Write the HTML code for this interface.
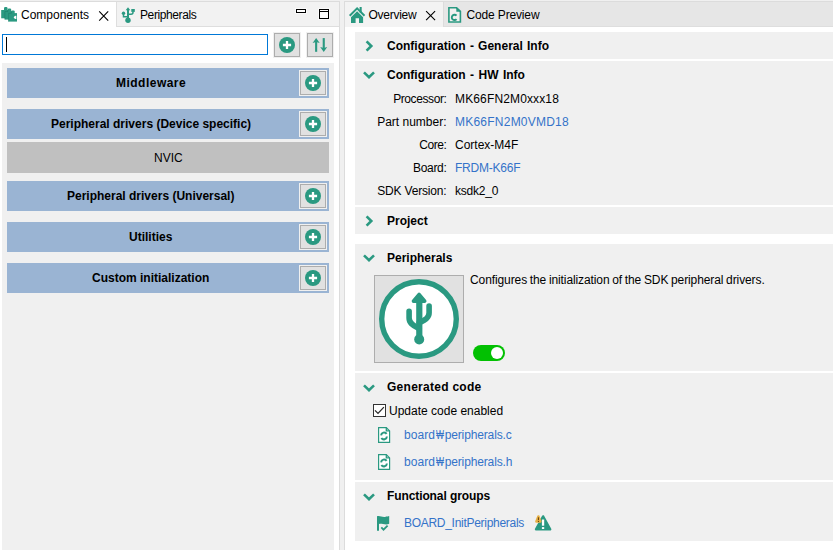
<!DOCTYPE html>
<html><head><meta charset="utf-8">
<style>
html,body{margin:0;padding:0;}
body{width:833px;height:550px;overflow:hidden;background:#fff;position:relative;font-family:"Liberation Sans","NanumGothic",sans-serif;font-size:12px;color:#000;}
.abs{position:absolute;}
.t{position:absolute;white-space:nowrap;line-height:16px;height:16px;}
.b{font-weight:bold;}
.bar{position:absolute;left:7px;width:322px;height:30px;background:#9ab4d3;}
.btn{position:absolute;box-sizing:border-box;border:1px solid #adadad;background:#e1e1e1;outline:1px solid #f0f0f0;}
.sec{position:absolute;left:355px;width:478px;background:#f0f0f0;}
.lnk{color:#3473c9;}
.won{display:inline-block;width:8.800px;transform:scaleX(0.7);transform-origin:0 50%;margin-left:0.800px}
</style></head><body>
<!-- top strip -->
<div class="abs" style="left:0;top:0;width:833px;height:1px;background:#f0f0f0"></div>
<div class="abs" style="left:0;top:1px;width:340px;height:1px;background:#dcdcdc"></div>
<div class="abs" style="left:344px;top:1px;width:489px;height:1px;background:#dcdcdc"></div>
<!-- LEFT PANEL -->
<div class="abs" id="ltab" style="left:0;top:2px;width:339px;height:25px;background:#f2f2f2;border-bottom:1px solid #dedede;box-sizing:border-box"></div>
<div class="abs" id="lact" style="left:0;top:2px;width:117px;height:25px;background:#fff;border-right:1px solid #dedede;box-sizing:border-box"></div>
<div class="abs" style="left:339px;top:1px;width:1px;height:549px;background:#dcdcdc"></div>
<div class="abs" style="left:340px;top:0px;width:4px;height:550px;background:#f0f0f0"></div>
<div class="abs" style="left:344px;top:1px;width:1px;height:549px;background:#dcdcdc"></div>
<!-- components icon -->
<svg class="abs" style="left:0px;top:5px" width="19" height="19" viewBox="0 5 19 19"><g fill="#2a9981">
<rect x="1.200" y="10" width="8" height="8.300"/><rect x="4" y="7" width="3.500" height="4" rx="1.200"/>
<rect x="4.700" y="11.400" width="8" height="8.200"/><rect x="7.700" y="8.500" width="3.500" height="4" rx="1.200"/>
<path d="M8.300 13.100h8.700v8.500h-8.700z"/><path d="M16.300 15.700h-0.700a1.650 1.650 0 0 0 0 3.300h0.700z" fill="#fff"/><rect x="11.200" y="10.400" width="3.500" height="4" rx="1.200"/>
</g><g fill="none" stroke="#16705c" stroke-opacity="0.55" stroke-width="0.700"><path d="M4.900 19.500V11.500H8"/><path d="M8.600 21.500V13.300H11.500"/><path d="M7.900 11.300V9.500"/><path d="M11.400 13V11.400"/></g></svg>
<div class="t" id="tcomp" style="left:21px;top:7px;">Components</div>
<svg class="abs" style="left:98px;top:10px" width="12" height="12" viewBox="98 10 12 12"><path d="M99.200 11.400L108.200 20.600M108.200 11.400L99.200 20.600" stroke="#000" stroke-width="1.100" fill="none"/></svg>
<!-- peripherals tab icon -->
<svg class="abs" style="left:120px;top:5px" width="17" height="20" viewBox="120 5 17 20"><g fill="#2a9981" stroke="none">
<path d="M128 7.200l2.300 3h-4.600z"/><circle cx="128" cy="20.300" r="2.700"/><circle cx="123.500" cy="13.300" r="1.700"/><rect x="131.300" y="9" width="3.500" height="2.900"/></g>
<g fill="none" stroke="#2a9981"><path d="M128 9.500V20" stroke-width="2"/><path d="M123.500 13.500V16.700H128" stroke-width="1.500"/><path d="M133 11.500V12.300Q133 14.300 131 14.300H128" stroke-width="1.500"/></g></svg>
<div class="t" id="tper" style="left:140px;top:7px;letter-spacing:-0.4px">Peripherals</div>
<!-- min / max icons -->
<div class="abs" style="left:296px;top:9px;width:10px;height:4px;box-sizing:border-box;border:1px solid #000;background:#fff;box-shadow:0 0 0 1px #fafafa"></div>
<div class="abs" style="left:319px;top:9px;width:10px;height:10px;box-sizing:border-box;border:1px solid #000;background:#fff;box-shadow:0 0 0 1px #fafafa"></div>
<div class="abs" style="left:319px;top:11px;width:10px;height:1px;background:#000"></div>
<!-- search -->
<div class="abs" id="inp" style="left:2px;top:34px;width:266px;height:21px;box-sizing:border-box;border:1px solid #0078d7;background:#fff"></div>
<div class="abs" style="left:6px;top:37px;width:1px;height:15px;background:#000"></div>
<div class="btn" style="left:274px;top:33px;width:26px;height:24px;"></div>
<svg class="abs" style="left:278px;top:36px" width="18" height="18" viewBox="0 0 18 18"><circle cx="9" cy="9" r="8" fill="#2a9981"/><path d="M9 4.900v8.200M4.900 9h8.200" stroke="#fff" stroke-width="2.300"/></svg>
<div class="btn" style="left:307px;top:33px;width:26px;height:24px;"></div>
<svg class="abs" style="left:310px;top:35px" width="20" height="20" viewBox="310 35 20 20"><g fill="#2a9981" stroke="none"><rect x="315.100" y="40" width="2.100" height="11.800"/><rect x="322.700" y="38.100" width="2.100" height="11.800"/><path d="M316.150 37.900L319.700 43.100L316.150 42L312.600 43.100Z"/><path d="M323.750 52L327.200 46.900L323.750 48L320.200 46.900Z"/></g></svg>
<!-- list panel -->
<div class="abs" style="left:2px;top:63px;width:332px;height:487px;background:#f0f0f0"></div>
<div class="bar" style="top:68px"></div>
<div class="bar" style="top:109px"></div>
<div class="bar" style="top:142px;height:31px;background:#c0c0c0"></div>
<div class="bar" style="top:181px"></div>
<div class="bar" style="top:222px"></div>
<div class="bar" style="top:263px"></div>
<div class="btn" style="left:300px;top:71px;width:26px;height:24px;"></div>
<svg class="abs" style="left:304px;top:74px" width="18" height="18" viewBox="0 0 18 18"><circle cx="9" cy="9" r="8" fill="#2a9981"/><path d="M9 4.900v8.200M4.900 9h8.200" stroke="#fff" stroke-width="2.300"/></svg>
<div class="btn" style="left:300px;top:112px;width:26px;height:24px;"></div>
<svg class="abs" style="left:304px;top:115px" width="18" height="18" viewBox="0 0 18 18"><circle cx="9" cy="9" r="8" fill="#2a9981"/><path d="M9 4.900v8.200M4.900 9h8.200" stroke="#fff" stroke-width="2.300"/></svg>
<div class="btn" style="left:300px;top:184px;width:26px;height:24px;"></div>
<svg class="abs" style="left:304px;top:187px" width="18" height="18" viewBox="0 0 18 18"><circle cx="9" cy="9" r="8" fill="#2a9981"/><path d="M9 4.900v8.200M4.900 9h8.200" stroke="#fff" stroke-width="2.300"/></svg>
<div class="btn" style="left:300px;top:225px;width:26px;height:24px;"></div>
<svg class="abs" style="left:304px;top:228px" width="18" height="18" viewBox="0 0 18 18"><circle cx="9" cy="9" r="8" fill="#2a9981"/><path d="M9 4.900v8.200M4.900 9h8.200" stroke="#fff" stroke-width="2.300"/></svg>
<div class="btn" style="left:300px;top:266px;width:26px;height:24px;"></div>
<svg class="abs" style="left:304px;top:269px" width="18" height="18" viewBox="0 0 18 18"><circle cx="9" cy="9" r="8" fill="#2a9981"/><path d="M9 4.900v8.200M4.900 9h8.200" stroke="#fff" stroke-width="2.300"/></svg>
<div class="t b" id="b1" style="left:116px;top:75px;letter-spacing:0.48px">Middleware</div>
<div class="t b" id="b2" style="left:51px;top:116px">Peripheral drivers (Device specific)</div>
<div class="t" id="b3" style="left:154px;top:150px">NVIC</div>
<div class="t b" id="b4" style="left:67px;top:188px">Peripheral drivers (Universal)</div>
<div class="t b" id="b5" style="left:129px;top:229px">Utilities</div>
<div class="t b" id="b6" style="left:92px;top:270px">Custom initialization</div>
<!-- RIGHT PANEL -->
<div class="abs" id="rtab" style="left:345px;top:2px;width:488px;height:25px;background:#e6e6e6;border-bottom:1px solid #dedede;box-sizing:border-box"></div>
<div class="abs" id="ract" style="left:345px;top:2px;width:99px;height:25px;background:#f3f3f3;border-right:1px solid #dcdcdc;box-sizing:border-box"></div>
<div class="t" id="tov" style="left:368.500px;top:7px;letter-spacing:-0.27px">Overview</div>
<div class="t" id="tcp" style="left:466.500px;top:7px;letter-spacing:-0.15px">Code Preview</div>
<div class="sec" style="top:32px;height:27px"></div>
<div class="sec" style="top:61px;height:144px"></div>
<div class="sec" style="top:207px;height:27px"></div>
<div class="sec" style="top:244px;height:127px"></div>
<div class="sec" style="top:373px;height:107px"></div>
<div class="sec" style="top:482px;height:59px"></div>
<div class="t b" id="s1" style="left:387px;top:38px;word-spacing:0.9px">Configuration - General Info</div>
<div class="t b" id="s2" style="left:387px;top:67px;word-spacing:1.1px">Configuration - HW Info</div>
<div class="t b" id="s3" style="left:387px;top:213px">Project</div>
<div class="t b" id="s4" style="left:387px;top:250px">Peripherals</div>
<div class="t b" id="s5" style="left:387px;top:379px;letter-spacing:0.27px">Generated code</div>
<div class="t b" id="s6" style="left:387px;top:488px;letter-spacing:-0.1px">Functional groups</div>

<!-- HW info rows -->
<div class="t" id="l1" style="right:386.500px;top:91px;letter-spacing:-0.4px">Processor:</div>
<div class="t" id="v1" style="left:455px;top:91px;letter-spacing:0.14px">MK66FN2M0xxx18</div>
<div class="t" id="l2" style="right:386.500px;top:114px">Part number:</div>
<div class="t lnk" id="v2" style="left:455px;top:114px;letter-spacing:0.23px">MK66FN2M0VMD18</div>
<div class="t" id="l3" style="right:386.500px;top:137px;letter-spacing:-0.4px">Core:</div>
<div class="t" id="v3" style="left:455px;top:137px">Cortex-M4F</div>
<div class="t" id="l4" style="right:386.500px;top:160px;letter-spacing:-0.3px">Board:</div>
<div class="t lnk" id="v4" style="left:455px;top:160px;letter-spacing:-0.22px">FRDM-K66F</div>
<div class="t" id="l5" style="right:386.500px;top:183px;letter-spacing:-0.17px">SDK Version:</div>
<div class="t" id="v5" style="left:455px;top:183px;letter-spacing:-0.2px">ksdk2_0</div>
<!-- chevrons -->
<svg class="abs" style="left:355px;top:32px" width="30" height="518" viewBox="0 0 30 518" fill="none" stroke="#2a9981" stroke-width="2.600">
<path d="M11.600 9.300l4.700 4.700l-4.700 4.700"/>
<path d="M11.600 184.300l4.700 4.700l-4.700 4.700"/>
<path d="M9 40.400l5 4.900l5 -4.900"/>
<path d="M9 223.400l5 4.900l5 -4.900"/>
<path d="M9 353.400l5 4.900l5 -4.900"/>
<path d="M9 462.400l5 4.900l5 -4.900"/>
</svg>
<!-- Peripherals big button -->
<div class="abs" style="left:374px;top:275px;width:90px;height:88px;box-sizing:border-box;border:1px solid #adadad;background:#e1e1e1"></div>
<svg class="abs" style="left:374px;top:275px" width="90" height="88" viewBox="374 275 90 88">
<circle cx="419" cy="319" r="37.300" fill="#fff" stroke="#2a9981" stroke-width="5.400"/>
<g fill="none" stroke="#2a9981" stroke-linecap="round">
<path d="M419.300 299v38" stroke-width="6.200" stroke-linecap="butt"/>
<path d="M409.100 311.300V318C409.100 322.500 412 325.200 419.200 328.600" stroke-width="5.600"/>
<path d="M429.100 306V312.800C429.100 317.300 426.200 319.500 419.200 322.800" stroke-width="5.600"/>
</g>
<path d="M419.100 294.300L424.800 301.200H413.400Z" fill="#2a9981" stroke="#2a9981" stroke-width="3.400" stroke-linejoin="round"/>
<circle cx="419.200" cy="339.400" r="5" fill="#2a9981"/>
</svg>
<div class="t" id="desc" style="left:470px;top:272px;letter-spacing:-0.1px;word-spacing:-0.5px">Configures the initialization of the SDK peripheral drivers.</div>
<div class="abs" style="left:473px;top:345px;width:32px;height:16px;border-radius:8px;background:#02c002"></div>
<div class="abs" style="left:491px;top:347px;width:12px;height:12px;border-radius:6px;background:#fff"></div>
<!-- Generated code -->
<div class="abs" style="left:373px;top:404px;width:13px;height:13px;box-sizing:border-box;border:1px solid #333;background:#fff"></div>
<svg class="abs" style="left:373px;top:404px" width="13" height="13" viewBox="0 0 13 13"><path d="M2 6.400L5 9.400L10.900 3.100" fill="none" stroke="#2a2a2a" stroke-width="1.300"/></svg>
<div class="t" id="upd" style="left:389px;top:403px">Update code enabled</div>
<svg class="abs" style="left:377px;top:426px" width="15" height="18" viewBox="377 426 15 18"><path d="M378.600 427.600H386.300L389.600 430.900V442.300H378.600Z" fill="#fff" stroke="#2a9981" stroke-width="1.200"/><path d="M386.300 427.600V430.900H389.600" fill="none" stroke="#2a9981" stroke-width="1.300"/><path d="M381.100 435.400A3 3 0 0 1 386.600 433.900M386.900 436.500A3 3 0 0 1 381.400 438" fill="none" stroke="#2a9981" stroke-width="2"/></svg>
<div class="t lnk" id="f1" style="left:404px;top:427px"><span style="letter-spacing:0.08px">board</span><span class="won">₩</span><span style="letter-spacing:-0.14px">peripherals.c</span></div>
<svg class="abs" style="left:377px;top:453px" width="15" height="18" viewBox="377 426 15 18"><path d="M378.600 427.600H386.300L389.600 430.900V442.300H378.600Z" fill="#fff" stroke="#2a9981" stroke-width="1.200"/><path d="M386.300 427.600V430.900H389.600" fill="none" stroke="#2a9981" stroke-width="1.300"/><path d="M381.100 435.400A3 3 0 0 1 386.600 433.900M386.900 436.500A3 3 0 0 1 381.400 438" fill="none" stroke="#2a9981" stroke-width="2"/></svg>
<div class="t lnk" id="f2" style="left:404px;top:454px"><span style="letter-spacing:0.08px">board</span><span class="won">₩</span><span style="letter-spacing:-0.14px">peripherals.h</span></div>
<!-- Functional groups -->
<svg class="abs" style="left:375px;top:514px" width="17" height="19" viewBox="375 514 17 19"><path d="M377 516.200C380 515.500 382 517.300 385 516.900C387 516.700 388 516.300 389.200 516.100V523.800C387 524.700 385 524.400 383 523.900C381 523.500 380 523.600 379 523.900V530.800H377Z" fill="#2a9981"/><path d="M381.300 527.400L383.500 529.700L387.600 525.600" fill="none" stroke="#2a9981" stroke-width="1.800"/></svg>
<div class="t lnk" id="fg" style="left:404px;top:515px;letter-spacing:-0.29px">BOARD_InitPeripherals</div>
<svg class="abs" style="left:533px;top:513px" width="20" height="19" viewBox="533 513 20 19"><path d="M543.100 516.500L550.100 529.300H536.100Z" fill="#2a9981" stroke="#2a9981" stroke-width="2.600" stroke-linejoin="round"/><rect x="541.900" y="519.500" width="2.300" height="6.200" fill="#fff"/><rect x="541.900" y="527.100" width="2.300" height="1.900" fill="#fff"/><path d="M538.400 516.500L540.300 521.500H536.400Z" fill="#efc25e" stroke="#e8b146" stroke-width="2.500" stroke-linejoin="round"/><path d="M538.400 517.300V520.200M538.400 521V522" stroke="#4a2c08" stroke-width="0.900" fill="none"/></svg>
<!-- right tabs icons -->
<svg class="abs" style="left:347px;top:5px" width="20" height="20" viewBox="347 5 20 20"><path d="M349.700 15.700L357.100 8.300L364.500 15.700" fill="none" stroke="#2a9981" stroke-width="2"/><path d="M351 17.300L357.100 11.200L363.100 17.300V23H359V18.200H355.600V23H351Z" fill="#2a9981"/><rect x="359.600" y="7" width="2.100" height="5.500" fill="#2a9981"/></svg>
<svg class="abs" style="left:425px;top:10px" width="12" height="12" viewBox="425 10 12 12"><path d="M426.100 11.100L435.100 20.100M435.100 11.100L426.100 20.100" stroke="#000" stroke-width="1.100" fill="none"/></svg>
<svg class="abs" style="left:447px;top:6px" width="16" height="18" viewBox="447 6 16 18"><path d="M448.900 7.800H456.600L460.400 11.400V22H448.900Z" fill="#f3f0f0" stroke="#2a9981" stroke-width="1.600"/><path d="M456.300 7.400L460.800 11.700H456.300Z" fill="#2a9981"/><path d="M456.500 15.700A2.650 2.650 0 1 0 456.500 19.100" fill="none" stroke="#2a9981" stroke-width="1.900"/></svg>
</body></html>
